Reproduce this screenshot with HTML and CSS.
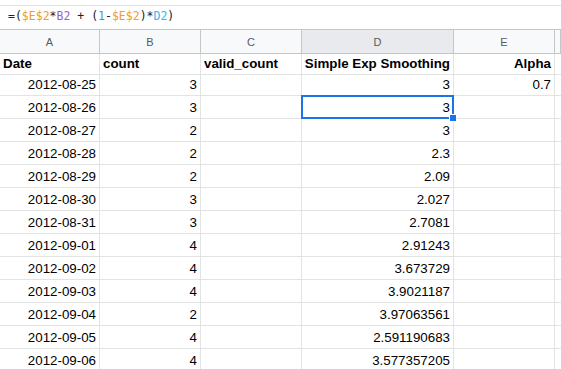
FILE: index.html
```html
<!DOCTYPE html>
<html lang="en">
<head>
    <meta charset="UTF-8">
    <title>Simple Exp Smoothing</title>
    <link rel="stylesheet" href="styles.css">
</head>
<body>

<div class="toolbar"></div>
<div class="formula-bar"><span>=(</span><span class="ref-e">$E$2</span><span>*</span><span class="ref-b">B2</span><span> + (</span><span class="num">1</span><span>-</span><span class="ref-e">$E$2</span><span>)*</span><span class="ref-d">D2</span><span>)</span></div>

<div class="sheet">
    <div class="row col-heads">
        <div class="cell">A</div>
        <div class="cell">B</div>
        <div class="cell">C</div>
        <div class="cell active">D</div>
        <div class="cell">E</div>
        <div class="cell"></div>
    </div>

    <div class="row short">
        <div class="cell bold">Date</div>
        <div class="cell bold">count</div>
        <div class="cell bold">valid_count</div>
        <div class="cell bold right">Simple Exp Smoothing</div>
        <div class="cell bold right">Alpha</div>
        <div class="cell"></div>
    </div>
    <div class="row short">
        <div class="cell right">2012-08-25</div>
        <div class="cell right">3</div>
        <div class="cell"></div>
        <div class="cell right">3</div>
        <div class="cell right">0.7</div>
        <div class="cell"></div>
    </div>
    <div class="row">
        <div class="cell right">2012-08-26</div>
        <div class="cell right">3</div>
        <div class="cell"></div>
        <div class="cell right selected">3<span class="selection"></span><span class="handle"></span></div>
        <div class="cell"></div>
        <div class="cell"></div>
    </div>
    <div class="row">
        <div class="cell right">2012-08-27</div>
        <div class="cell right">2</div>
        <div class="cell"></div>
        <div class="cell right">3</div>
        <div class="cell"></div>
        <div class="cell"></div>
    </div>
    <div class="row">
        <div class="cell right">2012-08-28</div>
        <div class="cell right">2</div>
        <div class="cell"></div>
        <div class="cell right">2.3</div>
        <div class="cell"></div>
        <div class="cell"></div>
    </div>
    <div class="row">
        <div class="cell right">2012-08-29</div>
        <div class="cell right">2</div>
        <div class="cell"></div>
        <div class="cell right">2.09</div>
        <div class="cell"></div>
        <div class="cell"></div>
    </div>
    <div class="row">
        <div class="cell right">2012-08-30</div>
        <div class="cell right">3</div>
        <div class="cell"></div>
        <div class="cell right">2.027</div>
        <div class="cell"></div>
        <div class="cell"></div>
    </div>
    <div class="row">
        <div class="cell right">2012-08-31</div>
        <div class="cell right">3</div>
        <div class="cell"></div>
        <div class="cell right">2.7081</div>
        <div class="cell"></div>
        <div class="cell"></div>
    </div>
    <div class="row">
        <div class="cell right">2012-09-01</div>
        <div class="cell right">4</div>
        <div class="cell"></div>
        <div class="cell right">2.91243</div>
        <div class="cell"></div>
        <div class="cell"></div>
    </div>
    <div class="row">
        <div class="cell right">2012-09-02</div>
        <div class="cell right">4</div>
        <div class="cell"></div>
        <div class="cell right">3.673729</div>
        <div class="cell"></div>
        <div class="cell"></div>
    </div>
    <div class="row">
        <div class="cell right">2012-09-03</div>
        <div class="cell right">4</div>
        <div class="cell"></div>
        <div class="cell right">3.9021187</div>
        <div class="cell"></div>
        <div class="cell"></div>
    </div>
    <div class="row">
        <div class="cell right">2012-09-04</div>
        <div class="cell right">2</div>
        <div class="cell"></div>
        <div class="cell right">3.97063561</div>
        <div class="cell"></div>
        <div class="cell"></div>
    </div>
    <div class="row">
        <div class="cell right">2012-09-05</div>
        <div class="cell right">4</div>
        <div class="cell"></div>
        <div class="cell right">2.591190683</div>
        <div class="cell"></div>
        <div class="cell"></div>
    </div>
    <div class="row">
        <div class="cell right">2012-09-06</div>
        <div class="cell right">4</div>
        <div class="cell"></div>
        <div class="cell right">3.577357205</div>
        <div class="cell"></div>
        <div class="cell"></div>
    </div>
</div>

</body>
</html>
```

FILE: styles.css
```css
body {
    margin: 0;
    background-color: #ffffff;
    font-family: 'Liberation Sans', Arial, sans-serif;
    overflow: hidden;
}
.toolbar {
    height: 5px;
}
.formula-bar {
    height: 24px;
    box-sizing: border-box;
    border-top: 1px solid #e1e3e6;
    padding: 2px 0 0 8px;
    font-family: 'DejaVu Sans Mono', monospace;
    font-size: 11.5px;
    line-height: 16px;
    color: #202124;
    white-space: pre;
}
.ref-e {
    color: #f29b2e;
}
.ref-b {
    color: #9b5fcf;
}
.ref-d {
    color: #3cb4e6;
}
.num {
    color: #4a90d6;
}
.row {
    display: grid;
    grid-template-columns: 100px 101px 101px 152px 101px 1fr;
    height: 23px;
}
.row.short {
    height: 21px;
}
.cell {
    box-sizing: border-box;
    border-right: 1px solid #e2e3e3;
    border-bottom: 1px solid #e2e3e3;
    padding: 0 3px 2px;
    display: flex;
    align-items: flex-end;
    font-size: 13.33px;
    line-height: 16px;
    color: #000000;
    white-space: nowrap;
    overflow: hidden;
}
.cell.right {
    justify-content: flex-end;
}
.cell.bold {
    font-weight: bold;
}
.col-heads {
    height: 24px;
    border-top: 1px solid #c4c7c5;
    background-color: #f8f9fa;
}
.col-heads .cell {
    border-right-color: #c4c7c5;
    border-bottom-color: #c4c7c5;
    align-items: center;
    justify-content: center;
    padding: 0;
    font-size: 11px;
    color: #575a5d;
}
.col-heads .cell.active {
    background-color: #e8eaed;
}
.cell.selected {
    position: relative;
    overflow: visible;
}
.selection {
    position: absolute;
    top: -1px;
    left: -1px;
    right: -1px;
    bottom: -1px;
    border: 2px solid #1a73e8;
}
.handle {
    position: absolute;
    right: -4px;
    bottom: -4px;
    width: 6px;
    height: 6px;
    background-color: #1a73e8;
    border: 1px solid #ffffff;
    z-index: 1;
}
```
